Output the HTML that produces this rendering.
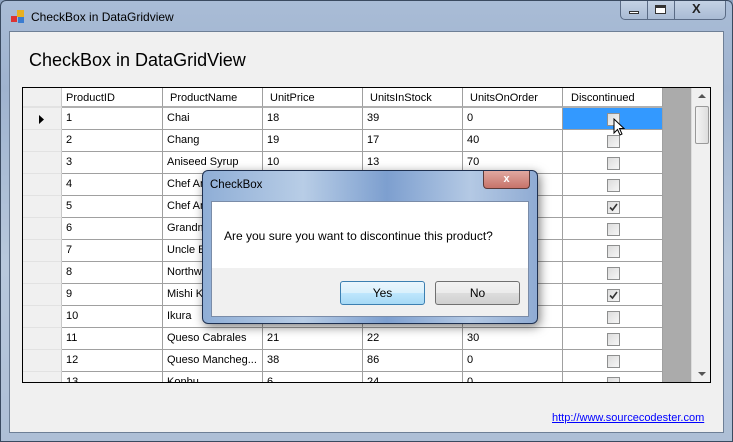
<!DOCTYPE html>
<html><head><meta charset="utf-8"><style>
*{margin:0;padding:0;box-sizing:border-box}
body{width:733px;height:442px;overflow:hidden;position:relative;font-family:"Liberation Sans",sans-serif;background:#8ea3c0}
.frame{position:absolute;left:0;top:0;width:733px;height:442px;background:linear-gradient(180deg,#a9bcd6 0%,#9fb3cf 20%,#b8c8dc 60%,#aebfd6 100%);border:1px solid #3a4a60;border-radius:6px 6px 0 0}
.title{position:absolute;left:31px;top:10px;font-size:12px;color:#000}
.client{position:absolute;left:9px;top:31px;width:715px;height:402px;background:#f0f0f0;border:1px solid #6e7f96}
.h1{position:absolute;left:29px;top:50px;font-size:18px;color:#000}
.grid{position:absolute;left:22px;top:87px;width:689px;height:296px;border:1px solid #000;background:#ababab;overflow:hidden}
.c{position:absolute;font-size:11px;color:#000;border-right:1px solid #a0a0a0;border-bottom:1px solid #a0a0a0;background:#fff;padding:4px 0 0 4px;height:22px;white-space:nowrap;overflow:hidden}
.hd{background:#fff;padding-top:4px;padding-left:7px;border-bottom:2px solid #b0b0b0}
.rh{background:#f0f0f0;border-bottom-color:#e2e2e2;border-right-color:#c8c8c8}
.cb{position:absolute;width:13px;height:13px;border:1px solid #8e8f8f;background:linear-gradient(135deg,#dcdcdc,#f6f6f6)}
.sb{position:absolute;left:668px;top:0;width:20px;height:294px;background:#f0f0f0;border-left:1px solid #ddd}
.dlg{position:absolute;left:202px;top:170px;width:336px;height:154px;border:1px solid #1e3050;border-radius:6px;background:linear-gradient(90deg,#8faed6,#b8cde6 30%,#7d9fcf 55%,#b4c9e4 80%,#8fabd3);box-shadow:2px 3px 10px rgba(0,0,0,.5)}
.btn{position:absolute;top:110px;height:24px;width:85px;border:1px solid #707070;border-radius:3px;background:linear-gradient(#f2f2f2,#ebebeb 50%,#dddddd 51%,#cfcfcf);font-size:12px;text-align:center;line-height:22px}
a{position:absolute;left:552px;top:412px;font-size:11px;color:#0000ff;text-decoration:underline}
</style></head><body>
<div class="frame"></div>
<svg style="position:absolute;left:11px;top:10px" width="14" height="14"><rect x="0" y="6" width="6" height="6" fill="#d33"/><rect x="6" y="0" width="7" height="7" fill="#e8b020"/><rect x="7" y="7" width="6" height="6" fill="#3a7cd0"/></svg>
<div class="title">CheckBox in DataGridview</div>
<div style="position:absolute;left:620px;top:1px;width:106px;height:19px;border:1px solid #5a6b85;border-top:none;border-radius:0 0 5px 5px;background:linear-gradient(#c4d2e4,#a9bbd4)"></div>
<div style="position:absolute;left:647px;top:1px;width:1px;height:18px;background:#5a6b85"></div>
<div style="position:absolute;left:674px;top:1px;width:1px;height:18px;background:#5a6b85"></div>
<div style="position:absolute;left:629px;top:11px;width:10px;height:3px;border:1px solid #333;background:#fff"></div>
<div style="position:absolute;left:655px;top:5px;width:11px;height:9px;border:1px solid #333;border-top-width:3px;background:#fff"></div>
<div style="position:absolute;left:692px;top:1px;font-size:13px;color:#222;font-weight:bold">X</div>
<div class="client"></div>
<div class="h1">CheckBox in DataGridView</div>
<div class="grid" id="g"></div>
<a>http://www.sourcecodester.com</a>
<div class="dlg">
<div style="position:absolute;left:7px;top:8px;font-size:11.5px;color:#000">CheckBox</div>
<div style="position:absolute;left:280px;top:0;width:47px;height:18px;border:1px solid #5a3a3a;border-top:none;border-radius:0 0 4px 4px;background:linear-gradient(#e0a8a0,#c7736a);color:#fff;text-align:center;font-size:11px;font-weight:bold;line-height:16px">x</div>
<div style="position:absolute;left:8px;top:30px;width:318px;height:116px;background:#f0f0f0;border:1px solid #7a8ca8">
<div style="position:absolute;left:0;top:0;width:316px;height:66px;background:#fff"></div>
<div style="position:absolute;left:12px;top:27px;font-size:12px;color:#000">Are you sure you want to discontinue this product?</div>
<div class="btn" style="left:128px;top:79px;border-color:#3c7fb1;background:linear-gradient(#eaf6fd,#d9f0fc 50%,#bee6fd 51%,#a7d9f5)">Yes</div>
<div class="btn" style="left:223px;top:79px">No</div>
</div></div>
<script>
var g=document.getElementById('g'),h='';
var cols=[[0,39],[39,101],[140,100],[240,100],[340,100],[440,100],[540,100]];
var heads=['','ProductID','ProductName','UnitPrice','UnitsInStock','UnitsOnOrder','Discontinued'];
cols.forEach(function(c,i){h+='<div class="c hd'+(i==0?' rh':'')+'" style="left:'+c[0]+'px;top:0;width:'+c[1]+'px;height:20px;padding-left:'+(i==6?8:(i==1?4:7))+'px">'+heads[i]+'</div>';});
var d=[[1,'Chai',18,39,0],[2,'Chang',19,17,40],[3,'Aniseed Syrup',10,13,70],[4,'Chef Anton\'s Cajun',22,53,0],[5,'Chef Anton\'s Gumbo',21,0,0],[6,'Grandma\'s Boysen',25,120,0],[7,'Uncle Bob\'s Organic',30,15,0],[8,'Northwoods Cranb',40,6,0],[9,'Mishi Kobe Niku',97,29,0],[10,'Ikura',31,31,0],[11,'Queso Cabrales',21,22,30],[12,'Queso Mancheg...',38,86,0],[13,'Konbu',6,24,0]];
d.forEach(function(r,k){var t=20+22*k;
h+='<div class="c rh" style="left:0;top:'+t+'px;width:39px"></div>';
for(var j=0;j<5;j++)h+='<div class="c" style="left:'+cols[j+1][0]+'px;top:'+t+'px;width:'+cols[j+1][1]+'px">'+r[j]+'</div>';
h+='<div class="c" style="left:540px;top:'+t+'px;width:100px;'+(k==0?'background:#3399ff':'')+'"></div>';
var ch=(k==4||k==8);
h+='<div class="cb" style="left:584px;top:'+(t+5)+'px">'+(ch?'<svg width="11" height="11" style="position:absolute;left:0;top:0"><path d="M2 5.5 L4.5 8 L9 2" stroke="#333" stroke-width="1.6" fill="none"/></svg>':'')+'</div>';});
h+='<svg style="position:absolute;left:16px;top:27px" width="6" height="9"><path d="M0 0 L5 4.5 L0 9z" fill="#000"/></svg>';
h+='<div class="sb"><svg style="position:absolute;left:6px;top:6px" width="8" height="5"><path d="M0 4 L4 0 L8 4z" fill="#555"/></svg><div style="position:absolute;left:3px;top:18px;width:14px;height:38px;border:1px solid #999;border-radius:2px;background:linear-gradient(90deg,#f4f4f4,#ddd)"></div><svg style="position:absolute;left:6px;top:284px" width="8" height="5"><path d="M0 0 L8 0 L4 4z" fill="#555"/></svg></div>';
h+='<svg style="position:absolute;left:590px;top:30px" width="14" height="20"><path d="M1 1 L1 15 L4.5 11.5 L7 17 L9 16 L6.5 10.5 L11 10.5z" fill="#fff" stroke="#000"/></svg>';
g.innerHTML=h;
</script>
</body></html>
